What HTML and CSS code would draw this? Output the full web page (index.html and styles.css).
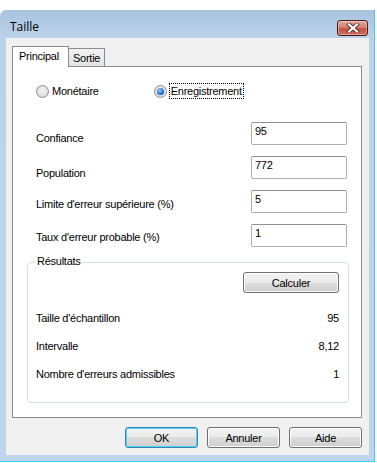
FILE: index.html
```html
<!DOCTYPE html>
<html lang="fr">
<head>
<meta charset="utf-8">
<title>Taille</title>
<link rel="stylesheet" href="styles.css">
</head>
<body>
<div class="window">
  <div class="titlebar">
    <span class="title">Taille</span>
    <span class="close">
      <svg width="14" height="10" viewBox="0 0 14 10">
        <path d="M3 1.5 L11 8.5 M11 1.5 L3 8.5" stroke="#5a3030" stroke-width="4" stroke-linecap="square"/>
        <path d="M3 1.5 L11 8.5 M11 1.5 L3 8.5" stroke="#ffffff" stroke-width="2.2" stroke-linecap="square"/>
      </svg>
    </span>
  </div>
  <div class="client">
    <div class="tabs">
      <div class="tab active">Principal</div>
      <div class="tab">Sortie</div>
    </div>
    <div class="panel">
      <div class="radios">
        <label class="radio"><span class="dot"></span><span>Monétaire</span></label>
        <label class="radio checked"><span class="dot"></span><span class="focus">Enregistrement</span></label>
      </div>
      <div class="form">
        <div class="row r1"><span class="lbl">Confiance</span><span class="input">95</span></div>
        <div class="row r2"><span class="lbl">Population</span><span class="input">772</span></div>
        <div class="row r3"><span class="lbl">Limite d'erreur supérieure (%)</span><span class="input">5</span></div>
        <div class="row r4"><span class="lbl">Taux d'erreur probable (%)</span><span class="input">1</span></div>
      </div>
      <div class="group">
        <span class="legend">Résultats</span>
        <div class="calc-row"><span class="btn calc">Calculer</span></div>
        <div class="res"><span>Taille d'échantillon</span><span>95</span></div>
        <div class="res"><span>Intervalle</span><span>8,12</span></div>
        <div class="res"><span>Nombre d'erreurs admissibles</span><span>1</span></div>
      </div>
    </div>
    <div class="buttons">
      <span class="btn default">OK</span>
      <span class="btn">Annuler</span>
      <span class="btn">Aide</span>
    </div>
  </div>
</div>
</body>
</html>
```

FILE: styles.css
```css
html, body {
  margin: 0;
  padding: 0;
  background: #ffffff;
}
body {
  width: 377px;
  height: 463px;
  overflow: hidden;
  font-family: "Liberation Sans", Arial, sans-serif;
  font-size: 11px;
  letter-spacing: -0.25px;
  color: #000;
}
.window {
  margin-top: 10px;
  width: 374px;
  height: 451px;
  border-right: 1px solid #2fd6f2;
  border-bottom: 1px solid #2fd6f2;
  border-top-left-radius: 6px;
  background: linear-gradient(to bottom, #a9c3df 0px, #bcd2ea 28px, #bfd5ec 100%);
  display: flex;
  flex-direction: column;
}
.titlebar {
  height: 28px;
  display: flex;
  align-items: center;
  justify-content: space-between;
  padding: 0 6px 0 10px;
}
.title {
  font-family: "Open Sans", "Liberation Sans", sans-serif;
  font-size: 12px;
  letter-spacing: 0;
  color: #000;
  margin-top: 4px;
}
.close {
  width: 29px;
  height: 14px;
  margin-top: 8px;
  border: 1px solid #4a1b1b;
  border-radius: 3px;
  background: linear-gradient(to bottom, #e4a69d 0%, #d78274 45%, #c7503c 55%, #d3725e 100%);
  display: flex;
  align-items: center;
  justify-content: center;
  box-shadow: inset 0 0 0 1px rgba(255,255,255,0.35);
}
.client {
  margin: 0 5px 0 6px;
  height: 417px;
  background: #f0f0f0;
  padding: 7px 0 0 6px;
  box-sizing: border-box;
}
.tabs {
  display: flex;
  align-items: flex-end;
  height: 21px;
}
.tab {
  height: 17px;
  padding: 0 4px;
  border: 1px solid #898c95;
  border-bottom: none;
  background: linear-gradient(to bottom, #f2f2f2, #e3e3e3);
  display: flex;
  align-items: center;
  margin-left: -1px;
}
.tab.active {
  height: 21px;
  padding: 0 6px;
  background: #fff;
  margin-left: 0;
  position: relative;
  z-index: 2;
  margin-bottom: -1px;
  align-items: flex-start;
  padding-top: 3px;
  box-sizing: border-box;
  width: 57px;
}
.panel {
  width: 350px;
  height: 352px;
  box-sizing: border-box;
  background: #fff;
  border: 1px solid #898c95;
  padding: 15px 0 0 23px;
  position: relative;
}
.radios {
  display: flex;
  height: 18px;
  align-items: center;
}
.radio {
  display: flex;
  align-items: center;
  gap: 3px;
}
.radio + .radio {
  margin-left: 55px;
}
.dot {
  width: 11px;
  height: 11px;
  border-radius: 50%;
  border: 1px solid #8f8f8f;
  background: radial-gradient(circle at 50% 40%, #f4f4f4 0%, #dcdcdc 70%, #c8c8c8 100%);
  display: inline-block;
  position: relative;
}
.radio.checked .dot::after {
  content: "";
  position: absolute;
  left: 2px;
  top: 2px;
  width: 7px;
  height: 7px;
  border-radius: 50%;
  background: radial-gradient(circle at 40% 35%, #8fd0ff 0%, #1c6ad0 60%, #0b3c8c 100%);
}
.focus {
  outline: 1px dotted #000;
  padding: 1px 1px;
}
.form {
  margin-top: 22px;
  display: flex;
  flex-direction: column;
  gap: 11px;
}
.row {
  display: flex;
  justify-content: space-between;
  align-items: center;
  width: 311px;
  height: 23px;
}
.row .lbl {
  position: relative;
}
.r1 .lbl { top: 4px; }
.r2 .lbl { top: 5px; }
.r3 .lbl { top: 2px; }
.r4 .lbl { top: 1px; }
.input {
  width: 96px;
  height: 23px;
  box-sizing: border-box;
  border: 1px solid #abadb3;
  border-top-color: #8e9095;
  border-radius: 2px;
  padding: 2px 0 0 3px;
  background: #fff;
}
.group {
  margin: 15px 0 0 -9px;
  width: 322px;
  height: 141px;
  box-sizing: border-box;
  border: 1px solid #d5dfe5;
  border-radius: 4px;
  position: relative;
  padding: 9px 9px 0 8px;
}
.legend {
  position: absolute;
  top: -8px;
  left: 7px;
  background: #fff;
  padding: 0 2px 0 2px;
}
.calc-row {
  display: flex;
  justify-content: flex-end;
  margin-right: 0;
}
.btn {
  width: 73px;
  height: 21px;
  box-sizing: border-box;
  border: 1px solid #707070;
  border-radius: 3px;
  background: linear-gradient(to bottom, #f2f2f2 0%, #ebebeb 50%, #dddddd 50%, #cfcfcf 100%);
  display: flex;
  align-items: center;
  justify-content: center;
  box-shadow: inset 0 0 0 1px #fcfcfc;
}
.btn.calc {
  width: 96px;
}
.res {
  display: flex;
  justify-content: space-between;
  height: 28px;
  align-items: center;
}
.calc-row + .res {
  margin-top: 11px;
}
.buttons {
  display: flex;
  justify-content: flex-end;
  gap: 9px;
  width: 350px;
  margin-top: 9px;
}
.btn.default {
  border-color: #3c7fb1;
  box-shadow: inset 0 0 0 1px #48d5f8;
}
```
